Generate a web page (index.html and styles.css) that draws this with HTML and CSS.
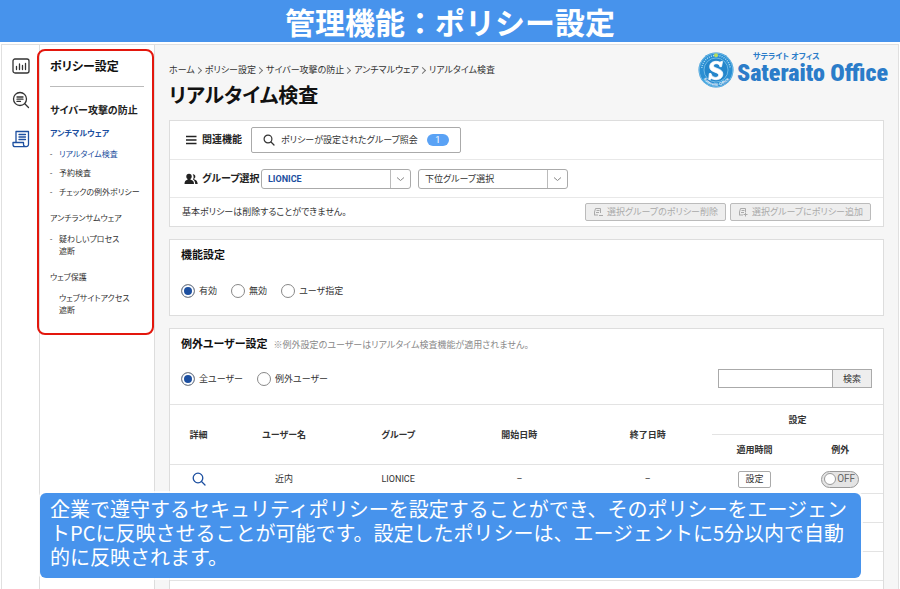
FILE: index.html
```html
<!DOCTYPE html>
<html lang="ja">
<head>
    <meta charset="UTF-8">
    <meta name="viewport" content="width=device-width, initial-scale=1.0">
    <title>管理機能：ポリシー設定</title>
    <link rel="stylesheet" href="styles.css">
</head>
<body>
    <header class="banner">管理機能：ポリシー設定</header>

    <div class="app">
        <!-- アイコンメニュー -->
        <nav class="rail" aria-label="メニュー">
            <a href="#" aria-label="統計">
                <svg width="18" height="18" viewBox="0 0 18 18" fill="none" stroke="#333" stroke-width="1.3" stroke-linecap="round">
                    <rect x="1" y="2" width="16" height="14" rx="2"/>
                    <path d="M4.500 9.500v3M7.500 7v5.500M10.500 8.500v4M13.500 6.500v6"/>
                </svg>
            </a>
            <a href="#" aria-label="ログ検索">
                <svg width="18" height="18" viewBox="0 0 18 18" fill="none" stroke="#333" stroke-width="1.3" stroke-linecap="round">
                    <circle cx="8" cy="8" r="6.500"/>
                    <path d="M12.800 12.800L16.500 16.500M5 6h6M5 8.200h6M5 10.400h3.500"/>
                </svg>
            </a>
            <a href="#" class="active" aria-label="ポリシー">
                <svg width="18" height="18" viewBox="0 0 18 18" fill="none" stroke="#1c4fa0" stroke-width="1.3" stroke-linecap="round" stroke-linejoin="round">
                    <path d="M4 12V1.500h12.500v13a2.200 2.200 0 0 1-2.300 2.200H3.200A2.200 2.200 0 0 1 1 14.500V12.500h10.500v1.800a2.300 2.300 0 0 0 2.500 2.400"/>
                    <path d="M7 4.500h6.500M7 7h6.500M7 9.500h6.500"/>
                </svg>
            </a>
        </nav>

        <!-- サイドメニュー -->
        <aside class="sidebar">
            <h2>ポリシー設定</h2>
            <h3>サイバー攻撃の防止</h3>
            <p class="group current">アンチマルウェア</p>
            <ul>
                <li class="dash"><a href="#" class="current">リアルタイム検査</a></li>
                <li class="dash"><a href="#">予約検査</a></li>
                <li class="dash"><a href="#">チェックの例外ポリシー</a></li>
            </ul>
            <p class="group">アンチランサムウェア</p>
            <ul>
                <li class="dash"><a href="#">疑わしいプロセス<br>遮断</a></li>
            </ul>
            <p class="group">ウェブ保護</p>
            <ul>
                <li><a href="#">ウェブサイトアクセス<br>遮断</a></li>
            </ul>
            <div class="marker"></div>
        </aside>

        <main class="main">
            <div class="page-head">
                <div>
                    <nav class="breadcrumb" aria-label="パンくず">
                        <a href="#">ホーム</a><i></i><a href="#">ポリシー設定</a><i></i><a href="#">サイバー攻撃の防止</a><i></i><a href="#">アンチマルウェア</a><i></i><span>リアルタイム検査</span>
                    </nav>
                    <h1>リアルタイム検査</h1>
                </div>
                <a href="#" class="logo">
                    <svg width="36" height="36" viewBox="0 0 36 36">
                        <defs><path id="ring" d="M2.300 18a15.700 15.700 0 0 0 31.400 0"/></defs>
                        <circle cx="18" cy="18" r="17.500" fill="#2b8fd3"/>
                        <circle cx="18" cy="18" r="16.800" fill="none" stroke="#8ccbee" stroke-width="0.700"/>
                        <path d="M3.800 16a14.300 14.300 0 0 1 28.400 0" fill="none" stroke="#a9d9f3" stroke-width="1.500" stroke-dasharray="1 1.200"/>
                        <circle cx="18" cy="18" r="12" fill="#2486cb" stroke="#8ccbee" stroke-width="0.700"/>
                        <text class="logo-ring"><textPath href="#ring" startOffset="50%" text-anchor="middle">Sateraito Office</textPath></text>
                        <path d="M24.500 9.500l-1 5.200h-1.600c-.4-2-1.700-3-3.600-3-1.700 0-2.800.8-2.800 2 0 1.300 1.300 1.800 3.700 2.700 3.500 1.300 5.600 2.700 5.600 5.600 0 3.500-2.900 5.700-6.900 5.700-1.800 0-3.200-.4-4.300-1.100l-1.400.9h-1.400l.5-6h1.700c.6 2.500 2.200 3.900 4.600 3.900 1.900 0 3.100-.9 3.100-2.300 0-1.400-1.200-2-3.700-2.900-3.400-1.200-5.300-2.600-5.300-5.400 0-3.300 2.700-5.500 6.500-5.500 1.600 0 2.900.4 3.800 1l1.100-.8z" fill="#fff" stroke="#fff" stroke-width="0.800"/>
                        <circle cx="18" cy="3.200" r="2" fill="#b9dc5a"/>
                    </svg>
                    <span class="logo-text"><small>サテライト オフィス</small><b>Sateraito Office</b></span>
                </a>
            </div>

            <section class="card">
                <div class="row related">
                    <span class="label">
                        <svg width="14" height="12" viewBox="0 0 14 12" stroke="#222" stroke-width="1.400"><path d="M2 2.500h10.500M2 6h10.500M2 9.500h10.500"/></svg>
                        関連機能
                    </span>
                    <button type="button" class="lookup">
                        <svg width="12" height="12" viewBox="0 0 12 12" fill="none" stroke="#333" stroke-width="1.200" stroke-linecap="round"><circle cx="5" cy="5" r="3.900"/><path d="M8 8l3 3"/></svg>
                        ポリシーが設定されたグループ照会
                        <span class="badge">1</span>
                    </button>
                </div>
                <div class="row groups">
                    <label class="label" for="group">
                        <svg width="14" height="12" viewBox="0 0 14 12" fill="#222">
                            <circle cx="5" cy="3.500" r="2.700"/>
                            <path d="M3.500 5.500h3v1.300c2.300.5 3.500 1.500 3.500 4.200H.5c0-2.700 1-3.700 3-4.200z"/>
                            <path d="M8.700 1.200a2.400 2.400 0 0 1 1.600 4.400v.8c2 .5 3.200 1.600 3.400 4.600h-2.500c0-2-.6-3.500-2.200-4.500.9-1.500.9-3.800-.3-5.300z"/>
                        </svg>
                        グループ選択
                    </label>
                    <select id="group" class="chosen"><option>LIONICE</option></select>
                    <select aria-label="下位グループ選択"><option>下位グループ選択</option></select>
                </div>
                <div class="row notice">
                    <p>基本ポリシーは削除することができません。</p>
                    <button type="button" class="action" disabled>
                        <svg width="10" height="10" viewBox="0 0 10 10" fill="none" stroke="#aaa"><path d="M1.500 8V5l1-3.500h5V6M3.500 3.500h3M3 5.500h3M1 8h4M6 8.500h4"/></svg>
                        選択グループのポリシー削除
                    </button>
                    <button type="button" class="action" disabled>
                        <svg width="10" height="10" viewBox="0 0 10 10" fill="none" stroke="#aaa"><path d="M1.500 8V5l1-3.500h5V5M3.500 3.500h3M3 5.500h3M1 8h4M5.500 7.500h4M7.500 5.500v4"/></svg>
                        選択グループにポリシー追加
                    </button>
                </div>
            </section>

            <section class="card feature">
                <h2>機能設定</h2>
                <div class="radios">
                    <label><input type="radio" name="feature" checked>有効</label>
                    <label><input type="radio" name="feature">無効</label>
                    <label><input type="radio" name="feature">ユーザ指定</label>
                </div>
            </section>

            <section class="card">
                <div class="users-head">
                    <div class="title-line">
                        <h2>例外ユーザー設定</h2>
                        <p>※例外設定のユーザーはリアルタイム検査機能が適用されません。</p>
                    </div>
                    <div class="filter">
                        <div class="radios">
                            <label><input type="radio" name="users" checked>全ユーザー</label>
                            <label><input type="radio" name="users">例外ユーザー</label>
                        </div>
                        <form class="search">
                            <input type="text" aria-label="検索">
                            <button type="button">検索</button>
                        </form>
                    </div>
                </div>
                <table>
                    <thead>
                        <tr>
                            <th rowspan="2" class="w-detail">詳細</th>
                            <th rowspan="2" class="w-name">ユーザー名</th>
                            <th rowspan="2" class="w-name">グループ</th>
                            <th rowspan="2" class="w-date">開始日時</th>
                            <th rowspan="2" class="w-date">終了日時</th>
                            <th colspan="2" class="w-setting">設定</th>
                        </tr>
                        <tr>
                            <th>適用時間</th>
                            <th>例外</th>
                        </tr>
                    </thead>
                    <tbody>
                        <tr>
                            <td>
                                <a href="#" aria-label="詳細"><svg width="14" height="14" viewBox="0 0 14 14" fill="none" stroke="#1c4fa0" stroke-width="1.300" stroke-linecap="round"><circle cx="6" cy="6" r="4.800"/><path d="M9.500 9.500l3.500 3.500"/></svg></a>
                            </td>
                            <td>近内</td>
                            <td>LIONICE</td>
                            <td>–</td>
                            <td>–</td>
                            <td><button type="button" class="set">設定</button></td>
                            <td><button type="button" class="toggle" aria-pressed="false"><i></i>OFF</button></td>
                        </tr>
                        <tr><td colspan="7"></td></tr>
                        <tr><td colspan="7"></td></tr>
                        <tr><td colspan="7"></td></tr>
                        <tr><td colspan="7"></td></tr>
                    </tbody>
                </table>
            </section>
        </main>
    </div>

    <p class="caption">企業で遵守するセキュリティポリシーを設定することができ、そのポリシーをエージェントPCに反映させることが可能です。設定したポリシーは、エージェントに5分以内で自動的に反映されます。</p>
</body>
</html>
```

FILE: styles.css
```css
* {
    box-sizing: border-box;
}
body {
    display: flex;
    flex-direction: column;
    height: 100vh;
    margin: 0;
    overflow: hidden;
    background-color: #fff;
    color: #333;
    font-family: Roboto, "Noto Sans CJK JP", sans-serif;
    font-size: 9px;
    line-height: 12px;
    font-feature-settings: "palt";
}
h1, h2, h3, p, ul {
    margin: 0;
    padding: 0;
}
a {
    color: inherit;
    text-decoration: none;
}
svg {
    display: block;
    flex: none;
}
button, input, select {
    margin: 0;
    font: inherit;
    font-feature-settings: inherit;
    color: inherit;
}
.banner {
    flex: none;
    height: 42px;
    background-color: #4793ec;
    color: #fff;
    font-family: "Noto Sans CJK JP", sans-serif;
    font-size: 30px;
    font-weight: bold;
    line-height: 42px;
    text-align: center;
    font-feature-settings: normal;
}
.app {
    display: flex;
    flex: 1;
    min-height: 0;
    margin: 2px 1px 0;
    border: 1px solid #e0e0e0;
    border-bottom: none;
}

/* アイコンメニュー */
.rail {
    display: flex;
    flex-direction: column;
    align-items: center;
    flex: none;
    gap: 16px;
    width: 38px;
    padding-top: 12px;
    border-right: 1px solid #ddd;
}
.rail .active {
    margin-top: 5px;
}

/* サイドメニュー */
.sidebar {
    position: relative;
    flex: none;
    width: 115px;
    padding: 12px 10px;
    border-right: 1px solid #ddd;
    font-size: 8px;
    white-space: nowrap;
}
.sidebar h2 {
    padding-bottom: 9px;
    border-bottom: 1px solid #bbb;
    color: #111;
    font-size: 12px;
    line-height: 20px;
}
.sidebar h3 {
    margin-top: 16px;
    color: #222;
    font-size: 10px;
    line-height: 16px;
}
.sidebar .group {
    margin-top: 14px;
}
.sidebar h3 + .group {
    margin-top: 9px;
    font-weight: bold;
}
.sidebar ul {
    display: flex;
    flex-direction: column;
    gap: 7px;
    margin-top: 9px;
    padding-left: 9px;
    list-style: none;
}
.sidebar .dash {
    display: flex;
    margin-left: -9px;
}
.sidebar .dash::before {
    content: "-";
    flex: none;
    width: 9px;
}
.current {
    color: #1c4fa0;
}
.marker {
    position: absolute;
    top: 4px;
    right: 0;
    left: -3px;
    height: 286px;
    border: 2px solid #e3170d;
    border-radius: 8px;
    pointer-events: none;
}

/* メイン */
.main {
    flex: 1;
    min-width: 0;
    padding: 0 14px;
    background-color: #f6f6f6;
}
.page-head {
    display: flex;
    justify-content: space-between;
    height: 75px;
    padding-top: 7px;
}
.breadcrumb {
    display: flex;
    align-items: center;
    margin-top: 12px;
}
.breadcrumb i {
    width: 5px;
    height: 5px;
    margin: 0 4px 0 1px;
    border: solid #777;
    border-width: 1px 1px 0 0;
    transform: rotate(45deg);
}
h1 {
    margin-top: 5px;
    color: #111;
    font-size: 20px;
    line-height: 30px;
}
.logo {
    display: flex;
    gap: 3px;
    margin-right: -4px;
    color: #2b7cc9;
}
.logo-ring {
    fill: #fff;
    font-family: "Liberation Sans", sans-serif;
    font-size: 4px;
    font-weight: bold;
}
.logo-text {
    display: flex;
    flex-direction: column;
    white-space: nowrap;
}
.logo-text small {
    padding-left: 16px;
    font-size: 8px;
    font-weight: bold;
    line-height: 10px;
}
.logo-text b {
    font-family: "Roboto Condensed", Roboto, sans-serif;
    font-size: 24px;
    font-weight: 900;
    line-height: 22px;
}
.card {
    margin-bottom: 12px;
    border: 1px solid #ddd;
    background-color: #fff;
}
.card h2 {
    color: #111;
    font-size: 11px;
    line-height: 16px;
}
.row {
    display: flex;
    align-items: center;
    padding: 0 12px;
    border-bottom: 1px solid #e8e8e8;
}
.row:last-child {
    border-bottom: none;
}
.label {
    display: flex;
    align-items: center;
    flex: none;
    gap: 4px;
    width: 77px;
    margin-left: 2px;
    color: #222;
    font-size: 10px;
    font-weight: bold;
    white-space: nowrap;
}
.related {
    height: 39px;
}
.lookup {
    display: flex;
    align-items: center;
    gap: 6px;
    height: 26px;
    margin-left: -10px;
    padding: 0 11px;
    border: 1px solid #aaa;
    border-radius: 2px;
    background-color: #fff;
}
.badge {
    width: 22px;
    margin-left: 3px;
    border-radius: 6px;
    background-color: #5aa2f5;
    color: #fff;
    font-size: 9px;
    text-align: center;
}
.groups {
    gap: 7px;
    height: 38px;
}
.groups .label {
    margin-right: -7px;
}
select {
    width: 150px;
    height: 20px;
    padding: 0 25px 0 6px;
    border: 1px solid #aaa;
    border-radius: 3px;
    appearance: none;
    background: #fff url("data:image/svg+xml,%3Csvg xmlns='http://www.w3.org/2000/svg' width='20' height='18'%3E%3Cpath d='M.5 0v18' stroke='%23bbb'/%3E%3Cpath d='M7 7.500l3.500 3 3.500-3' fill='none' stroke='%23888'/%3E%3C/svg%3E") right center no-repeat;
}
select.chosen {
    color: #1c4fa0;
    font-weight: bold;
}
.notice {
    gap: 4px;
    height: 28px;
}
.notice p {
    flex: 1;
}
.action {
    display: flex;
    align-items: center;
    justify-content: center;
    gap: 4px;
    width: 141px;
    height: 18px;
    padding: 0;
    border: 1px solid #bbb;
    border-radius: 2px;
    background-color: #eee;
    color: #aaa;
    white-space: nowrap;
}
.feature {
    height: 77px;
    padding: 8px 11px;
}
.radios {
    display: flex;
    gap: 14px;
}
.radios label {
    display: flex;
    align-items: center;
    gap: 4px;
}
.feature .radios {
    margin-top: 20px;
}
.radios input {
    width: 14px;
    height: 14px;
    border: 1px solid #888;
    border-radius: 50%;
    appearance: none;
    background-color: #fff;
}
.radios input:checked {
    background-color: #1c4fa0;
    box-shadow: inset 0 0 0 2px #fff;
}
.users-head {
    height: 75px;
    padding: 8px 11px;
}
.title-line {
    display: flex;
    align-items: center;
    gap: 6px;
    color: #888;
}
.filter {
    display: flex;
    align-items: center;
    justify-content: space-between;
    margin-top: 16px;
}
.search {
    display: flex;
}
.search input {
    width: 114px;
    height: 19px;
    border: 1px solid #aaa;
    border-right: none;
}
.search button {
    width: 40px;
    padding: 0;
    border: 1px solid #aaa;
    background-color: #eee;
}
table {
    width: 100%;
    border-collapse: collapse;
    table-layout: fixed;
}
th, td {
    padding: 0;
    border-top: 1px solid #e3e3e3;
    text-align: center;
}
th {
    height: 30px;
}
td {
    height: 29px;
}
td a {
    display: inline-block;
    vertical-align: middle;
}
.w-detail {
    width: 8%;
}
.w-name {
    width: 16%;
}
.w-date {
    width: 18%;
}
.w-setting {
    width: 24%;
}
.set {
    width: 33px;
    height: 17px;
    padding: 0;
    border: 1px solid #aaa;
    border-radius: 2px;
    background-color: #fff;
    vertical-align: middle;
}
.toggle {
    display: inline-flex;
    align-items: center;
    gap: 1px;
    width: 38px;
    height: 17px;
    padding: 0 2px;
    border: 1px solid #999;
    border-radius: 9px;
    background-color: #e4e4e4;
    color: #666;
    font-size: 10px;
    vertical-align: middle;
}
.toggle i {
    flex: none;
    width: 12px;
    height: 12px;
    border: 1px solid #999;
    border-radius: 50%;
    background-color: #fff;
}

/* 説明文 */
.caption {
    position: absolute;
    right: 39px;
    bottom: 11px;
    left: 40px;
    padding: 4px 9px 9px 10px;
    border-radius: 6px;
    background-color: #4793ec;
    box-shadow: 0 0 0 2px rgba(255, 255, 255, 0.8);
    color: #fff;
    font-family: "Noto Sans CJK JP", sans-serif;
    font-size: 20px;
    line-height: 24px;
    font-feature-settings: normal;
}
```
